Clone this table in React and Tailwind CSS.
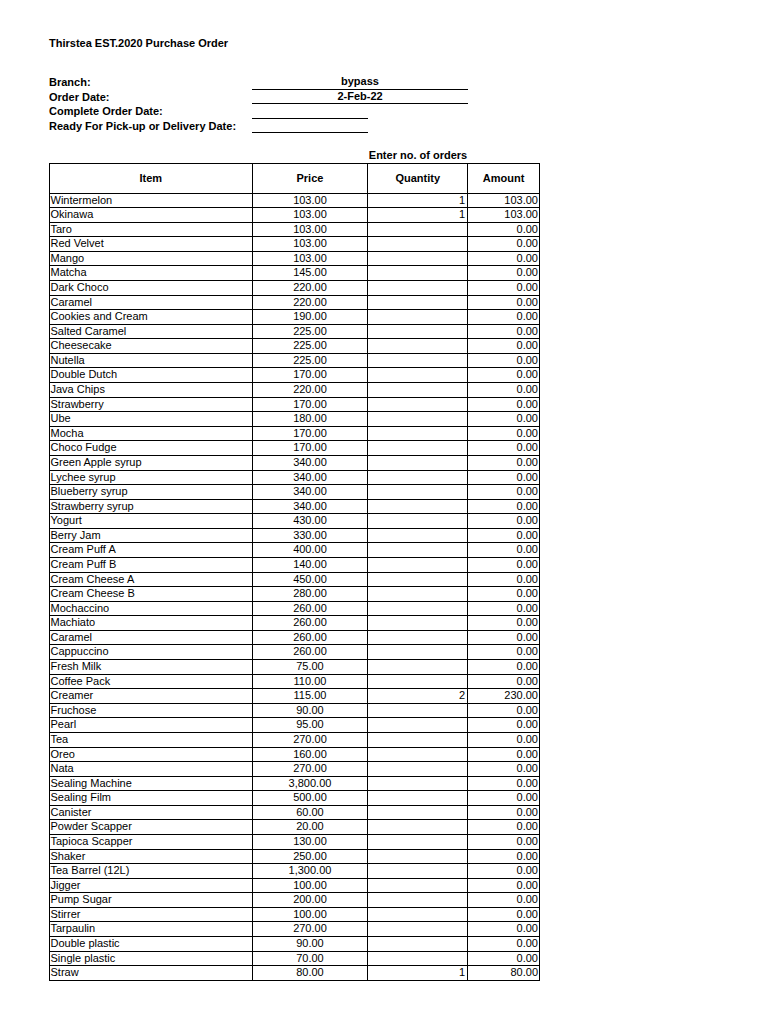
import React from 'react';

const items = [
    ['Wintermelon', '103.00', '1', '103.00'],
    ['Okinawa', '103.00', '1', '103.00'],
    ['Taro', '103.00', '', '0.00'],
    ['Red Velvet', '103.00', '', '0.00'],
    ['Mango', '103.00', '', '0.00'],
    ['Matcha', '145.00', '', '0.00'],
    ['Dark Choco', '220.00', '', '0.00'],
    ['Caramel', '220.00', '', '0.00'],
    ['Cookies and Cream', '190.00', '', '0.00'],
    ['Salted Caramel', '225.00', '', '0.00'],
    ['Cheesecake', '225.00', '', '0.00'],
    ['Nutella', '225.00', '', '0.00'],
    ['Double Dutch', '170.00', '', '0.00'],
    ['Java Chips', '220.00', '', '0.00'],
    ['Strawberry', '170.00', '', '0.00'],
    ['Ube', '180.00', '', '0.00'],
    ['Mocha', '170.00', '', '0.00'],
    ['Choco Fudge', '170.00', '', '0.00'],
    ['Green Apple syrup', '340.00', '', '0.00'],
    ['Lychee syrup', '340.00', '', '0.00'],
    ['Blueberry syrup', '340.00', '', '0.00'],
    ['Strawberry syrup', '340.00', '', '0.00'],
    ['Yogurt', '430.00', '', '0.00'],
    ['Berry Jam', '330.00', '', '0.00'],
    ['Cream Puff A', '400.00', '', '0.00'],
    ['Cream Puff B', '140.00', '', '0.00'],
    ['Cream Cheese A', '450.00', '', '0.00'],
    ['Cream Cheese B', '280.00', '', '0.00'],
    ['Mochaccino', '260.00', '', '0.00'],
    ['Machiato', '260.00', '', '0.00'],
    ['Caramel', '260.00', '', '0.00'],
    ['Cappuccino', '260.00', '', '0.00'],
    ['Fresh Milk', '75.00', '', '0.00'],
    ['Coffee Pack', '110.00', '', '0.00'],
    ['Creamer', '115.00', '2', '230.00'],
    ['Fruchose', '90.00', '', '0.00'],
    ['Pearl', '95.00', '', '0.00'],
    ['Tea', '270.00', '', '0.00'],
    ['Oreo', '160.00', '', '0.00'],
    ['Nata', '270.00', '', '0.00'],
    ['Sealing Machine', '3,800.00', '', '0.00'],
    ['Sealing Film', '500.00', '', '0.00'],
    ['Canister', '60.00', '', '0.00'],
    ['Powder Scapper', '20.00', '', '0.00'],
    ['Tapioca Scapper', '130.00', '', '0.00'],
    ['Shaker', '250.00', '', '0.00'],
    ['Tea Barrel (12L)', '1,300.00', '', '0.00'],
    ['Jigger', '100.00', '', '0.00'],
    ['Pump Sugar', '200.00', '', '0.00'],
    ['Stirrer', '100.00', '', '0.00'],
    ['Tarpaulin', '270.00', '', '0.00'],
    ['Double plastic', '90.00', '', '0.00'],
    ['Single plastic', '70.00', '', '0.00'],
    ['Straw', '80.00', '1', '80.00'],
];

const FormRow = ({ label, value, wide }) => (
    <div className="flex h-[14.6px]">
        <div className="w-[203px] font-bold leading-[14.6px]">{label}</div>
        <div className={`${wide ? 'w-[216px]' : 'w-[116px]'} border-b border-black text-center font-bold leading-[13.6px]`}>
            {value}
        </div>
    </div>
);

const App = () => {
    return (
        <div className="min-h-screen bg-white text-black text-[11px] pl-[49px] pt-[36px] pb-10" style={{ fontFamily: '"Liberation Sans", Arial, sans-serif' }}>
            {/* Title */}
            <div className="h-[14.6px] leading-[14.6px] font-bold">Thirstea EST.2020 Purchase Order</div>

            {/* Order info */}
            <div className="mt-[24.4px]">
                <FormRow label="Branch:" value="bypass" wide />
                <FormRow label="Order Date:" value="2-Feb-22" wide />
                <FormRow label="Complete Order Date:" value="" />
                <FormRow label="Ready For Pick-up or Delivery Date:" value="" />
            </div>

            <div className="mt-[14.6px] flex h-[14.6px]">
                <div className="w-[319px]"></div>
                <div className="w-[100px] text-center font-bold leading-[14.6px] whitespace-nowrap">Enter no. of orders</div>
            </div>

            {/* Table */}
            <div className="w-[491px] border-l border-t border-black">
                <div className="flex h-[30px] font-bold">
                    <div className="w-[203px] border-r border-b border-black flex items-center justify-center">Item</div>
                    <div className="w-[116px] border-r border-b border-black flex items-center justify-center">Price</div>
                    <div className="w-[100px] border-r border-b border-black flex items-center justify-center">Quantity</div>
                    <div className="w-[72px] border-r border-b border-black flex items-center justify-center">Amount</div>
                </div>
                {items.map(([name, price, qty, amount], i) => (
                    <div key={i} className="flex h-[14.58px] leading-[13.8px]">
                        <div className="w-[203px] border-r border-b border-black pl-[0.5px] whitespace-nowrap">{name}</div>
                        <div className="w-[116px] border-r border-b border-black text-center">{price}</div>
                        <div className="w-[100px] border-r border-b border-black text-right pr-[2px]">{qty}</div>
                        <div className="w-[72px] border-r border-b border-black text-right pr-[1px]">{amount}</div>
                    </div>
                ))}
            </div>
        </div>
    );
};

export default App;
